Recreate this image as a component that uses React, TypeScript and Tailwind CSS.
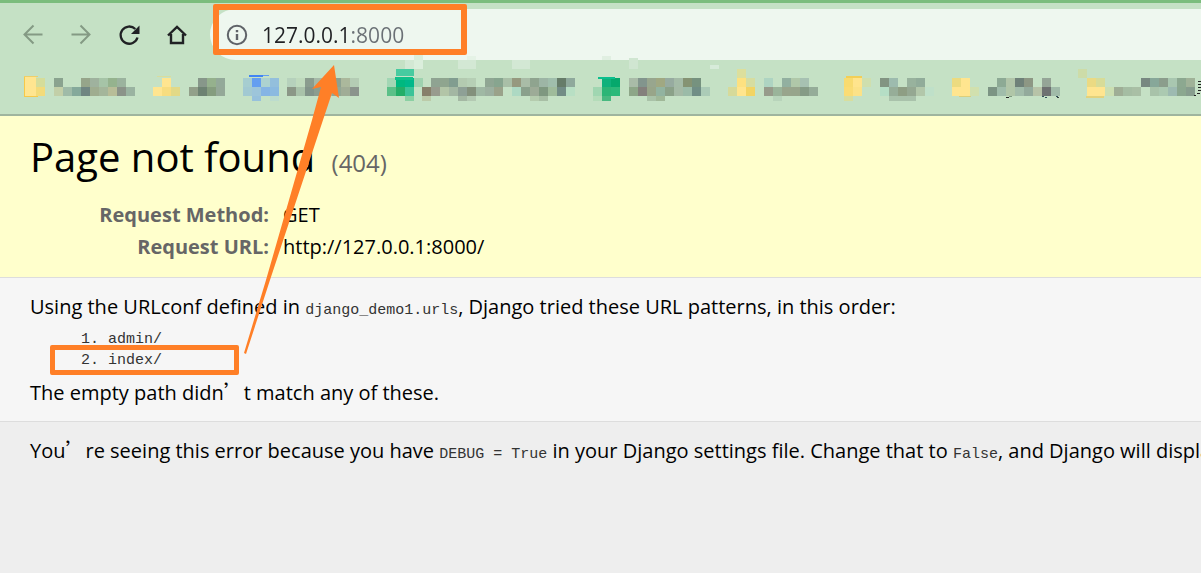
import { useState } from "react";

type Bookmark = {
  name: string;
  width: number;
  icon: string[];
  label: string[];
  labelX: number;
  accent?: { x: number; y: number; w: number; h: number; color: string }[];
};

const CELL = 9;

// Each string is one row of 9px cells, "-" leaves the cell empty.
const bookmarks: Bookmark[] = [
  {
    name: "Bookmark 1",
    width: 111,
    icon: ["-"],
    label: [
      "-",
      "8aa38f - - 96a58a 9fb29e a6c4a7 95b38e 9bb39e",
      "c2cfa8 9fbba8 85a99b 708682 9fad90 a4b69b b8bd98 8b9389 9ab3a1",
    ],
    labelX: 30,
    accent: [
      { x: 0, y: 17, w: 12, h: 20, color: "#ffe590" },
      { x: 0, y: 17, w: 1, h: 20, color: "#f6c94a" },
      { x: 12, y: 18, w: 9, h: 9, color: "#d5dd9a" },
      { x: 12, y: 27, w: 9, h: 9, color: "#f3db7a" },
      { x: 0, y: 16, w: 14, h: 1, color: "#eecf6a" },
      { x: 0, y: 36, w: 14, h: 1, color: "#f6c94a" },
    ],
  },
  {
    name: "Bookmark 2",
    width: 72,
    icon: ["-", "- ffe590", "ffe590 f7dd80 e2d987"],
    label: ["-", "- 87978a 95b18d 93a999", "92a08a 6d8272 859d7f 94a898"],
    labelX: 36,
    accent: [{ x: 4, y: 16, w: 14, h: 1, color: "#d8dd9e" }],
  },
  {
    name: "Bookmark 3",
    width: 126,
    icon: [
      "-",
      "a6cdd0 649ef0 add2d0 93bfdc",
      "a2c9d2 9dc5da 85b4e4 8bbae0",
      "- 97c1dc - bcdcce",
    ],
    label: [
      "-",
      "b6d1bc bfdabd 8a9c8e a6b9a8 b4cdb5 8da191 abb89c b4ccb4",
      "8b9787 a9c2aa 82948a 8b9d8f a4b5a0 92a795 a0ac96 8a938c",
    ],
    labelX: 44,
    accent: [
      { x: 6, y: 15, w: 14, h: 2, color: "#4285f4" },
      { x: 20, y: 15, w: 6, h: 1, color: "#649ef0" },
    ],
  },
  {
    name: "Bookmark 4",
    width: 188,
    icon: [
      "-",
      "a2d6b4 00b87f 00b88a 9fd2af",
      "5bc088 24ae68 3cc398",
      "- - 8bd0a3",
    ],
    label: [
      "-",
      "- 8fa392 8fa58f 819d90 b3cab0 b6cfb5 - 8fa693 87a58f a9bfa7 96997f a9bca7 8fa48f 9db5a5 a0beac 667c69 8fa99c",
      "87806a 989b8e b2c5a7 a3b7a3 8ea096 83907c 9fb8a4 9cb0a0 9aa28a - add9c3 8aa08c 9dab97 7f9880 9fbb9b 728c86 b8dfc4",
      "bccba9 - - - a4b8a3 b4cab3 - - - - - - b5ccae a8bfa5",
    ],
    labelX: 35,
    accent: [
      { x: 9, y: 9, w: 18, h: 7, color: "#47cba0" },
      { x: 8, y: 17, w: 18, h: 3, color: "#10c08a" },
      { x: 18, y: 0, w: 18, h: 9, color: "#d3e8d4" },
      { x: 27, y: -5, w: 9, h: 14, color: "#dbeedc" },
      { x: 71, y: 0, w: 18, h: 9, color: "#d3e8d4" },
      { x: 80, y: -4, w: 9, h: 4, color: "#e5f3e6" },
      { x: 125, y: 0, w: 18, h: 9, color: "#d3e8d4" },
    ],
  },
  {
    name: "Bookmark 5",
    width: 117,
    icon: ["-", "- 10b17b 05a86c", "a0d6b1 2cb576 2cb97a", "b4dcb9 48b980"],
    label: [
      "-",
      "a9bba8 82958d 98a68e a0a882 97aba0 a4bba7 859373 76927f",
      "8da688 84807c 98a589 92b3a0 8ba189 a5baa6 9bbba8 708e86 abcbb7",
      "- - a9c2a8 a0b898",
    ],
    labelX: 36,
    accent: [
      { x: 5, y: 17, w: 17, h: 2, color: "#0cbf8e" },
      { x: 9, y: -4, w: 9, h: 4, color: "#e0efe1" },
      { x: 36, y: -2, w: 9, h: 11, color: "#d0e6d1" },
      { x: 117, y: 5, w: 9, h: 4, color: "#d7ebda" },
    ],
  },
  {
    name: "Bookmark 6",
    width: 98,
    icon: ["- dcdf9d", "- fde180 d6dda0", "d6da9a ffe58e f2d463"],
    label: [
      "-",
      "aed4c2 - 92b0a0 b0c8a9 a7c1b2",
      "979b8b 9ab49a 98a58c 97a58c 859b86 95ac99",
      "- b8d4bb",
    ],
    labelX: 36,
  },
  {
    name: "Bookmark 7",
    width: 90,
    icon: ["-", "f8db70 ffe48d cfdfae", "fadc74 fce287", "d8de9e"],
    label: [
      "-",
      "829482 9dbbae - 98b29d 91ac9a",
      "b5dec5 96ad98 8e9e84 95a892 b2c7aa bfe0c9",
      "- a9c2ab a9c2ab a9c2ab",
    ],
    labelX: 36,
    accent: [{ x: 2, y: 16, w: 16, h: 2, color: "#f2cf58" }],
  },
  {
    name: "Bookmark 8",
    width: 108,
    icon: ["-", "ecdb80 ffe58f", "ffe58f ffe58f d1e0ae"],
    label: [
      "-",
      "- 8daa95 b1c5a9 6f8179 8d9784 - 95a597",
      "7c9484 a0bdab b0c6a8 a2bcaa 93aa9c b7c3a8 6e7171 a0bba9",
    ],
    labelX: 36,
    accent: [
      { x: 7, y: 36, w: 12, h: 1, color: "#dbcf7c" },
      { x: 54, y: 37, w: 3, h: 1, color: "#222222" },
      { x: 57, y: 36, w: 3, h: 1, color: "#7d9a80" },
      { x: 90, y: 36, w: 2, h: 1, color: "#33505c" },
      { x: 93, y: 37, w: 2, h: 1, color: "#33505c" },
      { x: 104, y: 36, w: 2, h: 1, color: "#33505c" },
      { x: 105, y: 37, w: 2, h: 1, color: "#33403c" },
    ],
  },
  {
    name: "Bookmark 9",
    width: 123,
    icon: ["cddca8", "- ebda83 d7dc98", "- ffe590 ffe590 cbdfb2"],
    label: [
      "-",
      "- - - 788881 87a799 8b9d8c a9c7b0 8ca890 a0b298",
      "9fae96 a5bda3 a9bfa5 - a8c2a9 abc9b1 9dbab1 8ba78f 879d8e",
    ],
    labelX: 36,
    accent: [
      { x: 8, y: 36, w: 18, h: 2, color: "#e3d27c" },
      { x: 120, y: 21, w: 3, h: 1, color: "#222222" },
      { x: 120, y: 24, w: 3, h: 1, color: "#222222" },
      { x: 120, y: 27, w: 3, h: 1, color: "#222222" },
      { x: 120, y: 30, w: 3, h: 1, color: "#222222" },
      { x: 119, y: 33, w: 3, h: 1, color: "#222222" },
      { x: 116, y: 35, w: 2, h: 1, color: "#222222" },
    ],
  },
];

function Cells({ rows, x }: { rows: string[]; x: number }) {
  return (
    <>
      {rows.map((row, r) =>
        row.split(" ").map((color, c) =>
          color === "-" ? null : (
            <rect
              key={`${r}-${c}`}
              x={x + c * CELL}
              y={(r + 1) * CELL}
              width={CELL}
              height={r === 3 ? 5 : CELL}
              fill={`#${color}`}
            />
          )
        )
      )}
    </>
  );
}

function BookmarkLink({ bookmark }: { bookmark: Bookmark }) {
  return (
    <a href="#" aria-label={bookmark.name} className="block shrink-0">
      <svg
        width={bookmark.width}
        height={54}
        shapeRendering="crispEdges"
        className="block overflow-visible"
      >
        <Cells rows={bookmark.icon} x={0} />
        <Cells rows={bookmark.label} x={bookmark.labelX} />
        {(bookmark.accent ?? []).map((a, i) => (
          <rect key={i} x={a.x} y={a.y} width={a.w} height={a.h} fill={a.color} />
        ))}
      </svg>
    </a>
  );
}

function Toolbar() {
  const [url, setUrl] = useState("127.0.0.1:8000");

  return (
    <div className="flex items-center pl-5 pt-1.5">
      <div className="flex items-center gap-6 mr-[22px]">
        <button type="button" aria-label="Back" className="text-[#849a84]">
          <svg width="24" height="24" viewBox="0 0 24 24" fill="none" stroke="currentColor" strokeWidth="2">
            <path d="M22.5 11.500H4.500M13.500 2.500l-9 9 9 9" />
          </svg>
        </button>
        <button type="button" aria-label="Forward" className="text-[#849a84]">
          <svg width="24" height="24" viewBox="0 0 24 24" fill="none" stroke="currentColor" strokeWidth="2">
            <path d="M3.500 11.500h18M12.500 2.500l9 9-9 9" />
          </svg>
        </button>
        <button type="button" aria-label="Reload" className="text-[#202124]">
          <svg width="24" height="24" viewBox="0 0 24 24" fill="none">
            <path d="M21.500 14.500A8.600 8.600 0 1 1 19.300 6" stroke="currentColor" strokeWidth="2.300" />
            <path d="M23.500 2.500v8.500H15z" fill="currentColor" />
          </svg>
        </button>
        <button type="button" aria-label="Home" className="text-[#202124]">
          <svg width="24" height="24" viewBox="0 0 24 24" fill="none" stroke="currentColor" strokeWidth="2.400">
            <path d="M4 12.500l9-8.600 9 8.600M7 11v9h12v-9" />
          </svg>
        </button>
      </div>
      <div className="flex h-[51px] flex-1 items-center gap-[14px] rounded-l-full bg-[#eef7ef] pl-4">
        <svg width="22" height="22" viewBox="0 0 22 22" fill="none" stroke="#5f6368" strokeWidth="2" className="shrink-0">
          <circle cx="11" cy="11" r="9.200" />
          <path d="M11 10v6M11 6v2.300" strokeWidth="2.400" />
        </svg>
        <input
          type="text"
          aria-label="Address"
          value={url}
          onChange={(e) => setUrl(e.target.value)}
          className="min-w-0 flex-1 bg-[linear-gradient(90deg,#202124_87px,#6a7075_87px)] bg-clip-text text-[21px] text-transparent outline-none"
        />
      </div>
    </div>
  );
}

function Code({ children }: { children: string }) {
  return (
    <code className="font-['Liberation_Mono',monospace] text-[15px] leading-none text-[#333]">
      {children}
    </code>
  );
}

// Full-width apostrophe, as the CJK fallback font sets it
function Apostrophe() {
  return <span className="font-['Noto_Sans_CJK_SC',sans-serif] leading-none">’</span>;
}

export default function App() {
  return (
    <div className="relative flex min-h-screen flex-col overflow-hidden bg-[#eee] font-['Open_Sans',sans-serif] text-[20px] leading-8 text-black">
      <header className="border-b-2 border-t-[3px] border-b-[#9fb59f] border-t-[#7bbd7d] bg-[#c5e1c5]">
        <Toolbar />
        <nav aria-label="Bookmarks" className="flex gap-[18px] pl-6">
          {bookmarks.map((bookmark) => (
            <BookmarkLink key={bookmark.name} bookmark={bookmark} />
          ))}
        </nav>
      </header>

      <section className="border-b border-[#ddd] bg-[#ffc] px-[30px] pb-[14px] pt-[14px]">
        <h1 className="mb-[9px] text-[40px] leading-[54px]">
          Page not found{" "}
          <span className="ml-1.5 text-[24px] text-[#666]">(404)</span>
        </h1>
        <table>
          <tbody>
            <tr>
              <th className="w-[239px] text-right font-bold text-[#666]">Request Method:</th>
              <td className="pl-[14px]">GET</td>
            </tr>
            <tr>
              <th className="text-right font-bold text-[#666]">Request URL:</th>
              <td className="pl-[14px]">http://127.0.0.1:8000/</td>
            </tr>
          </tbody>
        </table>
      </section>

      <main className="border-b border-[#ddd] bg-[#f6f6f6] px-[30px] pb-3 pt-[13px]">
        <p>
          Using the URLconf defined in <Code>django_demo1.urls</Code>, Django
          tried these URL patterns, in this order:
        </p>
        <ol className="mb-1.5 mt-1.5 font-['Liberation_Mono',monospace] text-[15px] leading-[21px] text-[#333]">
          {["admin/", "index/"].map((pattern, i) => (
            <li key={pattern} className="flex gap-[9px] pl-[51px]">
              <span>{i + 1}.</span>
              <span>{pattern}</span>
            </li>
          ))}
        </ol>
        <p>
          The empty path didn
          <Apostrophe />t match any of these.
        </p>
      </main>

      <footer className="px-[30px] py-[13px]">
        <p className="whitespace-nowrap">
          You
          <Apostrophe />
          re seeing this error because you have <Code>DEBUG = True</Code> in your
          Django settings file. Change that to <Code>False</Code>, and Django will
          display a standard 404 page.
        </p>
      </footer>

      {/* Markup drawn over the page */}
      <div className="pointer-events-none absolute left-[213px] top-1 h-[51px] w-[254px] rounded-xs border-6 border-[#ff7f27]" />
      <div className="pointer-events-none absolute left-[50px] top-[345px] h-[30px] w-[189px] rounded-xs border-5 border-[#ff7f27]" />
      <svg
        width="120"
        height="300"
        viewBox="230 60 120 300"
        aria-hidden="true"
        className="pointer-events-none absolute left-[230px] top-[60px]"
      >
        <path d="M334 65l5 33-7-5-9 27-53 160-24 74-2-1 22-73 46-160 9-33-9 2z" fill="#ff7f27" />
      </svg>
    </div>
  );
}
